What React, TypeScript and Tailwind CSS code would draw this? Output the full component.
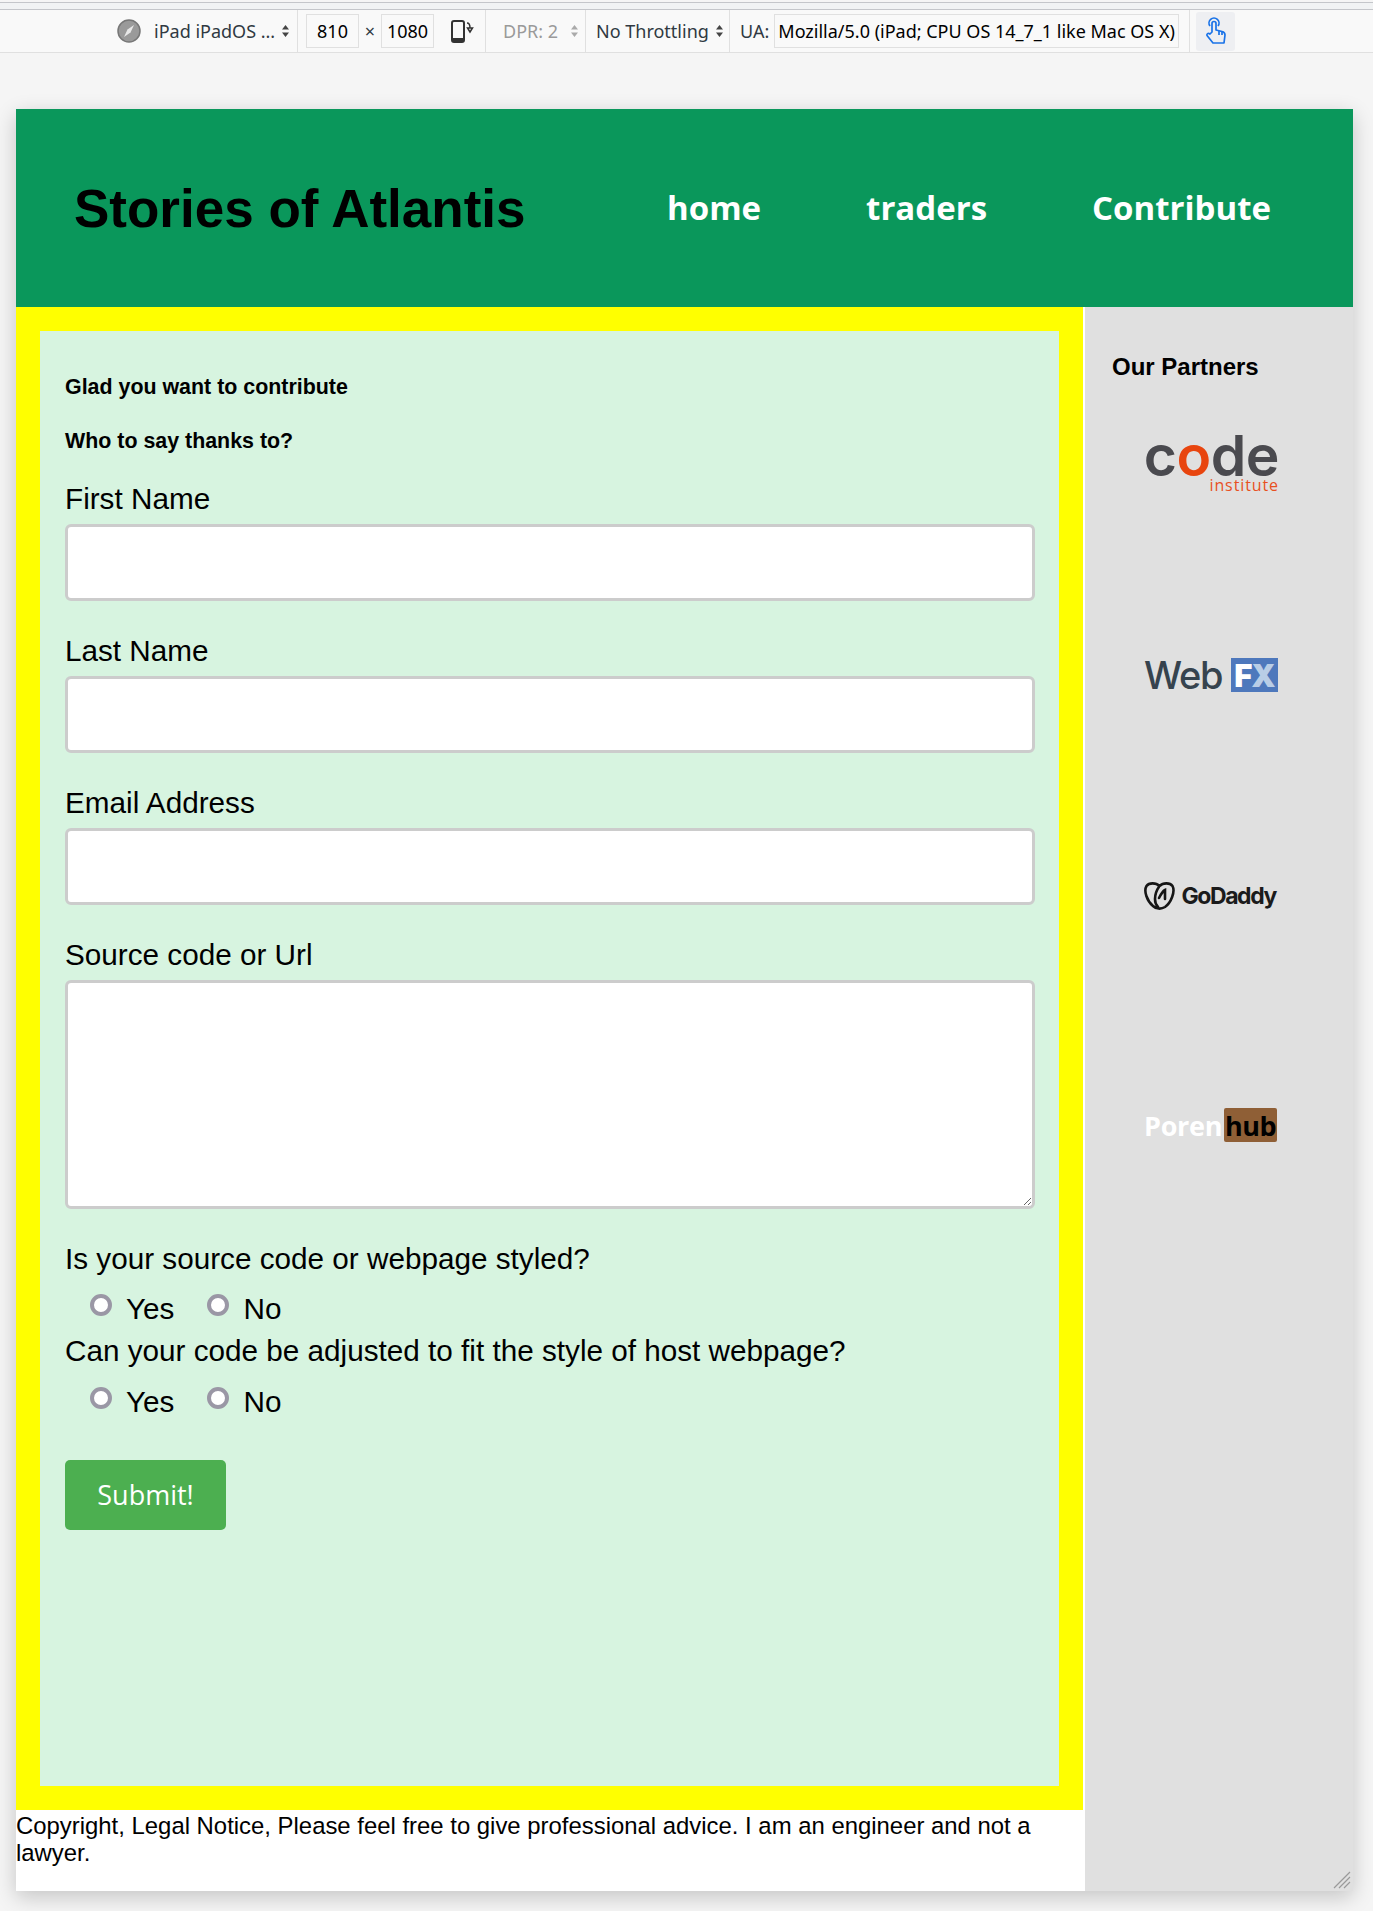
const sans = "font-['Liberation_Sans',Arial,sans-serif]";

function SelectArrows({ dim }: { dim?: boolean }) {
  return (
    <svg width="9" height="14" viewBox="0 0 9 14" className={dim ? 'text-[#aaaaaa]' : 'text-[#444444]'}>
      <path d="M4.5 1 L8 5.5 H1 Z M4.5 13 L1 8.5 H8 Z" fill="currentColor" />
    </svg>
  );
}

function Toolbar() {
  return (
    <div className="pt-[2px] font-['Noto_Sans','Open_Sans',sans-serif] text-[18px] text-[#303942]">
      <div className="h-[8px] bg-[#f1f3f4] border-t border-b border-t-[#c4c6ca] border-b-[#c4c6ca]" />
      <div className="h-[43px] bg-[#f9f9f9] border-b border-[#e0e0e0] flex items-stretch pl-[117px]">
        <div className="flex items-center w-[181px] border-r border-[#e0e0e0]">
          <svg width="24" height="24" viewBox="0 0 24 24" className="mr-[13px]">
            <circle cx="12" cy="12" r="11" fill="#9a9a9a" stroke="#777777" strokeWidth="1.5" />
            <path d="M17 6 L13.5 13.5 L7 18 L10.5 10.5 Z" fill="#e8e8e8" />
          </svg>
          <span className="whitespace-nowrap mr-[6px]">iPad iPadOS ...</span>
          <SelectArrows />
        </div>
        <div className="flex items-center w-[188px] border-r border-[#e0e0e0] pl-[8px]">
          <div className="w-[53px] h-[34px] border border-[#e0e0e0] flex items-center justify-center text-black">810</div>
          <span className="w-[22px] text-center">×</span>
          <div className="w-[53px] h-[34px] border border-[#e0e0e0] flex items-center justify-center text-black">1080</div>
          <svg width="24" height="24" viewBox="0 0 24 24" className="ml-[16px]">
            <rect x="2" y="2" width="12" height="21" rx="2" fill="none" stroke="#333333" strokeWidth="2" />
            <rect x="3" y="19" width="10" height="3" fill="#333333" />
            <path d="M17 4 C20 4 20 7 20 9 M17.5 9 H22.5 L20 13 Z" fill="none" stroke="#333333" strokeWidth="1.5" />
          </svg>
        </div>
        <div className="flex items-center w-[100px] border-r border-[#e0e0e0] pl-[17px] text-[#9a9a9a]">
          <span className="whitespace-nowrap mr-[12px]">DPR: 2</span>
          <SelectArrows dim />
        </div>
        <div className="flex items-center w-[144px] border-r border-[#e0e0e0] pl-[10px]">
          <span className="whitespace-nowrap mr-[6px]">No Throttling</span>
          <SelectArrows />
        </div>
        <div className="flex items-center w-[460px] border-r border-[#e0e0e0] pl-[10px]">
          <span className="mr-[5px]">UA:</span>
          <div className="w-[405px] h-[34px] border border-[#e0e0e0] flex items-center pl-[3px] text-black whitespace-nowrap">
            Mozilla/5.0 (iPad; CPU OS 14_7_1 like Mac OS X)
          </div>
        </div>
        <div className="flex items-center ml-[6px]">
          <div className="w-[39px] h-[39px] rounded-[3px] bg-[#eeeff2] flex items-center justify-center">
            <svg width="22" height="28" viewBox="0 0 22 28" fill="none" stroke="#1a73e8" strokeWidth="1.7" strokeLinejoin="round">
              <path d="M5 9 A5 5 0 1 1 13 9" />
              <path d="M7 15 V6.5 A2 2 0 0 1 11 6.5 V13 L17 14.5 C19 15 20 16 20 18 L19 26 H8 L2 18.5 C1.5 17 3 15.5 5 17 Z" />
              <path d="M14 14 V18 M17 15 V18" />
            </svg>
          </div>
        </div>
      </div>
    </div>
  );
}

function Field({ label, tall }: { label: string; tall?: boolean }) {
  return (
    <div className="mb-[33px]">
      <label className="block text-[29.7px] leading-[33px] mb-[9px]">{label}</label>
      {tall ? (
        <textarea className="block w-full h-[229px] bg-white border-[3px] border-[#cccccc] rounded-[6px]" />
      ) : (
        <input className="block w-full h-[77px] bg-white border-[3px] border-[#cccccc] rounded-[6px]" />
      )}
    </div>
  );
}

function RadioRow({ name }: { name: string }) {
  return (
    <div className="flex items-start pl-[25px] h-[59px] pt-[17px] text-[29.7px] leading-[33px]">
      <input type="radio" name={name} className="appearance-none w-[22px] h-[22px] rounded-full bg-white border-[4px] border-[#9a97a5] mt-[2px]" />
      <span className="ml-[14px]">Yes</span>
      <input type="radio" name={name} className="appearance-none w-[22px] h-[22px] rounded-full bg-white border-[4px] border-[#9a97a5] mt-[2px] ml-[33px]" />
      <span className="ml-[14px]">No</span>
    </div>
  );
}

function ContributeForm() {
  return (
    <div className="bg-[#d7f4e0] h-[1455px] pl-[25px] pr-[24px] pt-[44px] text-black">
      <p className="text-[21.4px] leading-[25px] font-bold mb-[29px]">Glad you want to contribute</p>
      <p className="text-[21.4px] leading-[25px] font-bold mb-[28px]">Who to say thanks to?</p>
      <Field label="First Name" />
      <Field label="Last Name" />
      <Field label="Email Address" />
      <div className="mt-[1px] mb-[21px]">
        <Field label="Source code or Url" tall />
      </div>
      <p className="text-[29.7px] leading-[33px]">Is your source code or webpage styled?</p>
      <RadioRow name="styled" />
      <p className="text-[29.7px] leading-[33px]">Can your code be adjusted to fit the style of host webpage?</p>
      <div className="pt-[1px]">
        <RadioRow name="adjust" />
      </div>
      <button className="block mt-[33px] w-[161px] h-[70px] bg-[#4caf50] rounded-[5px] text-white text-[27px] font-['Open_Sans',sans-serif]">
        Submit!
      </button>
    </div>
  );
}

function CodeLogo() {
  return (
    <div className="w-[135px] h-[62px] flex flex-col items-end font-['Inter',sans-serif]">
      <div className="text-[57px] leading-[46px] font-semibold text-[#4a4a4f] tracking-[-0.5px] whitespace-nowrap">
        c<span className="text-[#e8450f]">o</span>de
      </div>
      <div className="text-[16px] leading-[18px] text-[#e8501f] tracking-[0.9px] font-['Open_Sans',sans-serif] -mt-[3px]">institute</div>
    </div>
  );
}

function WebFxLogo() {
  return (
    <div className="w-[134px] flex items-center justify-between">
      <span className="text-[38px] leading-[34px] font-medium font-['Inter',sans-serif] text-[#36434e] tracking-[-1.2px]">Web</span>
      <div className="w-[47px] h-[34px] bg-[#4e78bc] flex items-center justify-center text-[31px] leading-none font-black font-['Inter',sans-serif] tracking-[-1px] text-white">
        F<span className="text-[#b9cde6]">X</span>
      </div>
    </div>
  );
}

function GoDaddyLogo() {
  return (
    <div className="w-[132px] flex items-center justify-between">
      <svg width="31" height="28" viewBox="0 0 31 28" fill="none" stroke="#161616" strokeWidth="2.6" strokeLinecap="round">
        <path d="M15.5 4 C12 0.5 5 0.5 2.5 4 C-0.5 9 3 19 9 24 C12 27 17 27.5 21 25 C27 21 31.5 9.5 28.5 4 C26 0.5 19 0.5 15.5 4 C13 7.5 11 12 11 17 C11 20 12 23 14 25" />
        <path d="M15 16 C17 12 19 9 21 8 L21 17" />
      </svg>
      <span className="text-[23px] leading-none font-bold font-['Inter',sans-serif] tracking-[-1.4px] text-[#1b1b1b]">GoDaddy</span>
    </div>
  );
}

function HubLogo() {
  return (
    <div className="w-[133px] flex items-center justify-between">
      <span className="text-[27px] leading-none font-bold font-['Open_Sans',sans-serif] text-white tracking-[-0.3px]">Poren</span>
      <div className="w-[53px] h-[34px] rounded-[2px] bg-[#8f5f36] flex items-center justify-center text-[27px] leading-none font-bold font-['Open_Sans',sans-serif] text-black tracking-[-0.5px]">
        hub
      </div>
    </div>
  );
}

function Partners() {
  return (
    <aside className="flex-1 bg-[#e0e0e0] relative pl-[27px]">
      <h2 className="text-[24px] leading-[28px] font-bold text-black pt-[46px]">Our Partners</h2>
      <div className="pl-[32px] flex flex-col">
        <div className="h-[224px] pt-[52px]"><CodeLogo /></div>
        <div className="h-[224px] pt-[53px]"><WebFxLogo /></div>
        <div className="h-[226px] pt-[53px]"><GoDaddyLogo /></div>
        <div className="pt-[53px]"><HubLogo /></div>
      </div>
      <svg width="18" height="18" viewBox="0 0 18 18" className="absolute right-[2px] bottom-[2px]" stroke="#9a9a9a" strokeWidth="1.2">
        <path d="M1 17 L17 1 M6 17 L17 6 M11 17 L17 11" />
      </svg>
    </aside>
  );
}

export default function App() {
  return (
    <div className={`${sans} min-h-[1911px] bg-[#f5f5f5]`}>
      <Toolbar />
      <div className="w-[1337px] ml-[16px] mt-[56px] bg-white flex flex-col shadow-[0_6px_20px_rgba(0,0,0,0.2)]">
        <header className="h-[198px] bg-[#0a975b] flex items-center pl-[58px] pr-[82px] justify-between">
          <h1 className="text-[53px] font-bold text-black leading-none whitespace-nowrap">Stories of Atlantis</h1>
          <nav className="flex gap-[105px] text-[33px] font-bold text-white font-['Open_Sans',sans-serif]">
            <a>home</a>
            <a>traders</a>
            <a>Contribute</a>
          </nav>
        </header>
        <div className="flex">
          <div className="w-[1069px]">
            <main className="bg-[#ffff00] p-[24px] w-[1067px]">
              <ContributeForm />
            </main>
            <footer className="h-[81px] text-[23.9px] leading-[27px] text-black pt-[2px] pr-[20px]">
              Copyright, Legal Notice, Please feel free to give professional advice. I am an engineer and not a lawyer.
            </footer>
          </div>
          <Partners />
        </div>
      </div>
    </div>
  );
}
